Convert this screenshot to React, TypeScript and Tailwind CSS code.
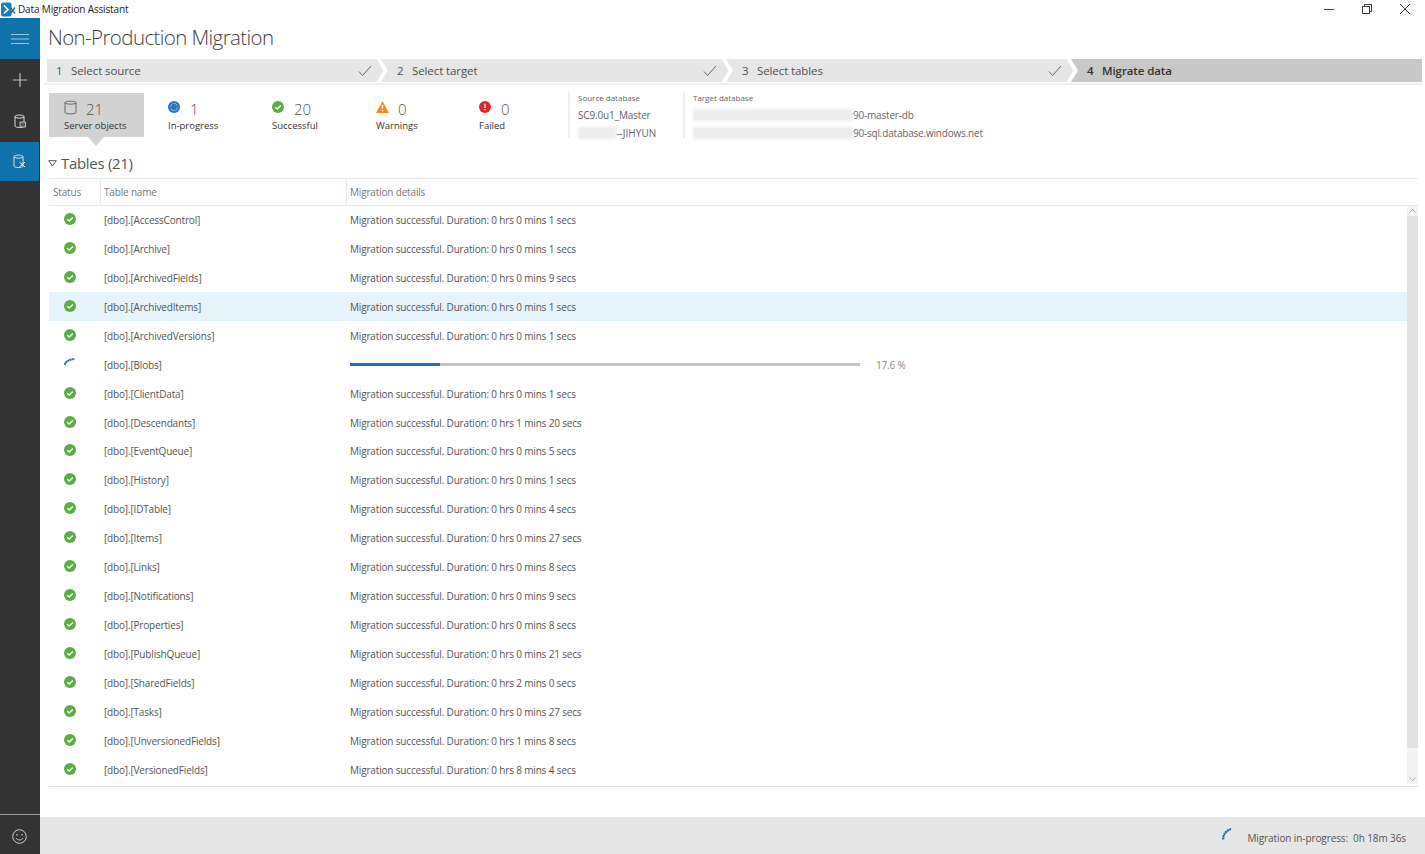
const rows: [string, string | null][] = [
  ["AccessControl", "0 hrs 0 mins 1 secs"],
  ["Archive", "0 hrs 0 mins 1 secs"],
  ["ArchivedFields", "0 hrs 0 mins 9 secs"],
  ["ArchivedItems", "0 hrs 0 mins 1 secs"],
  ["ArchivedVersions", "0 hrs 0 mins 1 secs"],
  ["Blobs", null],
  ["ClientData", "0 hrs 0 mins 1 secs"],
  ["Descendants", "0 hrs 1 mins 20 secs"],
  ["EventQueue", "0 hrs 0 mins 5 secs"],
  ["History", "0 hrs 0 mins 1 secs"],
  ["IDTable", "0 hrs 0 mins 4 secs"],
  ["Items", "0 hrs 0 mins 27 secs"],
  ["Links", "0 hrs 0 mins 8 secs"],
  ["Notifications", "0 hrs 0 mins 9 secs"],
  ["Properties", "0 hrs 0 mins 8 secs"],
  ["PublishQueue", "0 hrs 0 mins 21 secs"],
  ["SharedFields", "0 hrs 2 mins 0 secs"],
  ["Tasks", "0 hrs 0 mins 27 secs"],
  ["UnversionedFields", "0 hrs 1 mins 8 secs"],
  ["VersionedFields", "0 hrs 8 mins 4 secs"],
];

function CheckCircle({ size = 12 }: { size?: number }) {
  return (
    <svg width={size} height={size} viewBox="0 0 12 12">
      <circle cx="6" cy="6" r="6" fill="#5cad45" />
      <path d="M3.2 6.2 5.2 8 8.8 4.4" fill="none" stroke="#fff" strokeWidth="1.4" />
    </svg>
  );
}

function RowSpinner() {
  return (
    <svg width="12" height="12" viewBox="0 0 12 12">
      <path d="M.6 7C1.6 3.4 5 1.4 10.6 1" fill="none" stroke="#2a68b4" strokeWidth="2" strokeDasharray="2 0.4" />
    </svg>
  );
}

function BarSpinner() {
  return (
    <svg width="10" height="12" viewBox="0 0 10 12">
      <path d="M1.2 11.5C1 7 3.6 2.6 9.4 .8" fill="none" stroke="#2a68b4" strokeWidth="2.2" strokeDasharray="2 0.4" />
    </svg>
  );
}

function Chevron({ left, right }: { left: string; right: string }) {
  return (
    <svg width="14" height="23" viewBox="0 0 14 23" className="shrink-0 block">
      <rect width="14" height="23" fill={right} />
      <path d="M0 0H2L9 11.5 2 23H0Z" fill={left} />
      <path d="M1.5 0 8.5 11.5 1.5 23H6L13 11.5 6 0Z" fill="#fff" />
    </svg>
  );
}

function Tick() {
  return (
    <svg width="14" height="12" viewBox="0 0 14 12" className="shrink-0">
      <path d="M1 6.5 4.6 10.5 13 1" fill="none" stroke="#666" strokeWidth="1" />
    </svg>
  );
}

function Step({ n, label, width, done, active, first }: { n: number; label: string; width?: string; done?: boolean; active?: boolean; first?: boolean }) {
  return (
    <div className={`${width ?? "flex-1"} h-full flex items-center ${first ? "pl-[9px]" : "pl-[8px]"} pr-[3px] text-[11.5px] tracking-[-0.1px] ${active ? "bg-[#c8c8c8] text-[#333] font-semibold" : "bg-[#e6e6e6] text-[#505050]"}`}>
      <span className="w-[15px]">{n}</span>
      <span className="flex-1">{label}</span>
      {done && <Tick />}
    </div>
  );
}

function Stat({ icon, n, label, width, iconShift }: { icon: React.ReactNode; n: number; label: string; width: string; iconShift?: string }) {
  return (
    <div className={`${width} pl-[6px] pt-[6px]`}>
      <div className="flex h-[18px] items-center">
        <span className={`w-[22px] flex ${iconShift ?? "-mt-[3px]"}`}>{icon}</span>
        <span className="text-[15px] leading-none font-light text-[#555] mt-[2px]">{n}</span>
      </div>
      <div className="text-[9.5px] leading-[14px] mt-[2px] text-[#333] whitespace-nowrap">{label}</div>
    </div>
  );
}

function Blur({ width }: { width: string }) {
  return <div className={`${width} h-[12px] bg-[#ededed] blur-[1.5px] shrink-0`} />;
}

export default function App() {
  return (
    <div className="h-screen w-full overflow-hidden flex flex-col bg-white font-['Open_Sans',sans-serif]">
      {/* Title bar */}
      <div className="h-[18px] shrink-0 flex items-center">
        <svg width="15" height="15" viewBox="0 0 15 15" className="ml-[1px]">
          <rect width="10.5" height="14" y="0.5" rx="2" fill="#1a7dbd" />
          <path d="M2.8 3.5 7 7.5 2.8 11.5" fill="none" stroke="#fff" strokeWidth="1.5" />
          <path d="M9.5 5.5 14 11.5M14 5.5 9.5 11.5" fill="none" stroke="#1a6aa8" strokeWidth="1.3" />
        </svg>
        <span className="ml-[2px] text-[10px] text-[#222] tracking-[-0.15px] whitespace-nowrap">Data Migration Assistant</span>
        <div className="ml-auto flex items-center pr-[14px]">
          <svg width="10" height="10" viewBox="0 0 10 10"><path d="M0 5.5H10" stroke="#444" strokeWidth="1" /></svg>
          <svg width="10" height="10" viewBox="0 0 10 10" fill="none" stroke="#333" className="ml-[28px]"><path d="M.5 2.5H7.5V9.5H.5ZM2.5 2.5V.5H9.5V7.5H7.5" /></svg>
          <svg width="12" height="12" viewBox="0 0 12 12" className="ml-[27px]"><path d="M1 1 11 11M11 1 1 11" stroke="#444" strokeWidth="1" /></svg>
        </div>
      </div>

      <div className="flex-1 flex min-h-0">
        {/* Sidebar */}
        <div className="w-10 shrink-0 bg-[#333333] flex flex-col">
          <div className="h-[41px] bg-[#1072ab] flex items-center justify-center">
            <svg width="18" height="12" viewBox="0 0 18 12"><path d="M0 1.5H18M0 6H18M0 10.5H18" stroke="#9cc8e2" strokeWidth="1" /></svg>
          </div>
          <div className="h-[41px] flex items-center justify-center">
            <svg width="14" height="14" viewBox="0 0 14 14"><path d="M7 0V14M0 7H14" stroke="#bbb" strokeWidth="1.2" /></svg>
          </div>
          <div className="h-[42px] flex items-center justify-center pr-[1px]">
            <svg width="12" height="15" viewBox="0 0 12 15" fill="none" stroke="#ddd">
              <path d="M1 2.5C1 .6 10 .6 10 2.5V12C10 14 1 14 1 12Z" />
              <path d="M1 3C3 4.6 8 4.6 10 3" />
              <path d="M6 8H11.5V13H6Z" fill="#555" strokeWidth="0.8" />
            </svg>
          </div>
          <div className="h-[39px] w-[39px] bg-[#1072ab] flex items-center justify-center">
            <svg width="13" height="15" viewBox="0 0 13 15" fill="none" stroke="#cfe4f1">
              <path d="M1 2.5C1 .6 10 .6 10 2.5V12C10 14 1 14 1 12Z" />
              <path d="M1 3C3 4.6 8 4.6 10 3" />
              <path d="M6.5 8 12 13M12 8 6.5 13" stroke="#fff" />
            </svg>
          </div>
          <div className="flex-1" />
          <div className="h-[40px] border-t border-[#9a9a9a] flex items-center justify-center pt-[4px] pr-[1px]">
            <svg width="15" height="15" viewBox="0 0 15 15" fill="none" stroke="#ccc">
              <circle cx="7.5" cy="7.5" r="6.8" />
              <path d="M4 9C5 11.6 10 11.6 11 9" />
              <path d="M5 5V6.5M10 5V6.5" strokeWidth="1.2" />
            </svg>
          </div>
        </div>

        {/* Main */}
        <div className="flex-1 min-w-0 flex flex-col">
          <div className="h-[41px] shrink-0 pl-2 pt-[4px] text-[20.5px] leading-[30px] font-light text-[#444] tracking-[-0.6px] whitespace-nowrap">
            Non-Production Migration
          </div>

          {/* Steps */}
          <div className="ml-[7px] mr-[3px] h-[23px] shrink-0 flex">
            <Step n={1} label="Select source" width="w-[328px]" done first />
            <Chevron left="#e6e6e6" right="#e6e6e6" />
            <Step n={2} label="Select target" width="w-[331px]" done />
            <Chevron left="#e6e6e6" right="#e6e6e6" />
            <Step n={3} label="Select tables" width="w-[331px]" done />
            <Chevron left="#e6e6e6" right="#c8c8c8" />
            <Step n={4} label="Migrate data" active />
          </div>
          <div className="h-[2px] mt-[1px] ml-[4px] mr-[3px] bg-[#f0f0f0] shrink-0" />

          {/* Stats */}
          <div className="h-[66px] shrink-0 flex pl-[9px] pt-[8px]">
            <div className="w-[95px] h-[44px] bg-[#d2d2d2] relative pl-[9px]">
              <Stat
                width="w-full"
                n={21}
                label="Server objects"
                iconShift="-mt-[1px]"
                icon={
                  <svg width="13" height="15" viewBox="0 0 13 15" fill="none" stroke="#666">
                    <path d="M1 2.5C1 .7 12 .7 12 2.5V12.5C12 14.3 1 14.3 1 12.5Z" />
                    <path d="M1 3C3 4.6 10 4.6 12 3" />
                  </svg>
                }
              />
              <div className="absolute left-[39px] top-[44px] w-0 h-0 border-x-[8px] border-x-transparent border-t-[9px] border-t-[#d2d2d2]" />
            </div>
            <div className="w-[24px]" />
            <Stat
              width="w-[104px] -ml-[6px]"
              n={1}
              label="In-progress"
              icon={
                <svg width="12" height="12" viewBox="0 0 13 13">
                  <circle cx="6.5" cy="6.5" r="6.5" fill="#2a73bd" />
                  <path d="M3 6.5A3.5 3.5 0 0 1 10 5.5M10 6.5A3.5 3.5 0 0 1 3 7.5" fill="none" stroke="#8fb9e2" strokeWidth="1" />
                </svg>
              }
            />
            <Stat width="w-[104px]" n={20} label="Successful" icon={<CheckCircle size={12} />} />
            <Stat
              width="w-[103px]"
              n={0}
              label="Warnings"
              icon={
                <svg width="13" height="12" viewBox="0 0 14 13">
                  <path d="M7 0 14 13H0Z" fill="#f28a1e" />
                  <path d="M7 4V8.5M7 9.7V11.2" stroke="#fff" strokeWidth="1.5" />
                </svg>
              }
            />
            <Stat
              width="w-[95px]"
              n={0}
              label="Failed"
              icon={
                <svg width="12" height="12" viewBox="0 0 13 13">
                  <circle cx="6.5" cy="6.5" r="6.5" fill="#e3262a" />
                  <path d="M6.5 3V7.5M6.5 8.6V10" stroke="#fff" strokeWidth="1.6" />
                </svg>
              }
            />
            {/* DB info */}
            <div className="w-[115px] h-[46px] border-l-2 border-[#eeeeee] pl-2 text-[#666] -mt-px">
              <div className="text-[8px] leading-[12px] text-[#666] whitespace-nowrap">Source database</div>
              <div className="text-[10px] leading-[18px] mt-[2px] tracking-[-0.15px] whitespace-nowrap">SC9.0u1_Master</div>
              <div className="text-[10px] leading-[18px] flex items-center whitespace-nowrap">
                <Blur width="w-[38px]" />
                <span className="tracking-[0.1px]">--JIHYUN</span>
              </div>
            </div>
            <div className="h-[46px] border-l-2 border-[#eeeeee] pl-2 text-[#666] -mt-px">
              <div className="text-[8px] leading-[12px] whitespace-nowrap">Target database</div>
              <div className="text-[10px] leading-[18px] mt-[2px] tracking-[-0.2px] flex items-center whitespace-nowrap">
                <Blur width="w-[160px]" />
                90-master-db
              </div>
              <div className="text-[10px] leading-[18px] tracking-[-0.2px] flex items-center whitespace-nowrap">
                <Blur width="w-[160px]" />
                90-sql.database.windows.net
              </div>
            </div>
          </div>

          {/* Tables heading */}
          <div className="h-[27px] shrink-0 flex items-center pl-[8px] pb-[3px]">
            <svg width="9" height="7" viewBox="0 0 9 7" fill="none" stroke="#555" className="mt-[1px]"><path d="M.7.7H8.3L4.5 6Z" /></svg>
            <span className="ml-[4px] text-[15px] text-[#555] tracking-[-0.3px]">Tables (21)</span>
          </div>

          {/* Table */}
          <div className="ml-[9px] mr-[7px] flex flex-col text-[10px] tracking-[-0.17px]">
            <div className="h-[27.5px] border-y-[1px] border-y-[#e8e8e8] flex items-center text-[#777]">
              <div className="w-[52px] pl-1 h-[22px] pt-[1px] flex items-center border-r border-[#e4e4e4]">Status</div>
              <div className="w-[246px] pl-[3px] h-[22px] pt-[1px] flex items-center border-r border-[#e4e4e4]">Table name</div>
              <div className="pl-[3px] pt-[1px]">Migration details</div>
            </div>
            <div className="flex border-b border-[#e0e0e0] pb-[1.5px]">
              <div className="flex-1 min-w-0">
                {rows.map(([name, dur]) => (
                  <div
                    key={name}
                    className={`h-[28.95px] flex items-center text-[#555] pt-[1px] ${name === "ArchivedItems" ? "bg-[#e5f3fb]" : ""}`}
                  >
                    <div className="w-[52px] pl-[15px] flex -mt-[3px]">
                      {dur ? <CheckCircle /> : <RowSpinner />}
                    </div>
                    <div className="w-[246px] pl-[3px] whitespace-nowrap">[dbo].[{name}]</div>
                    <div className="pl-[3px] flex items-center whitespace-nowrap">
                      {dur ? (
                        `Migration successful. Duration: ${dur}`
                      ) : (
                        <>
                          <div className="w-[510px] h-[3px] bg-[#c4c4c4] -mt-[2px]">
                            <div className="h-full bg-[#2a70b8]" style={{ width: "17.6%" }} />
                          </div>
                          <span className="ml-[16px] text-[#888]">17.6 %</span>
                        </>
                      )}
                    </div>
                  </div>
                ))}
              </div>
              {/* Scrollbar */}
              <div className="w-[11px] shrink-0 bg-[#f4f4f4] flex flex-col">
                <div className="h-[10px] flex items-center justify-center">
                  <svg width="7" height="4" viewBox="0 0 7 4" fill="none" stroke="#aaa"><path d="M.5 3.5 3.5.5 6.5 3.5" /></svg>
                </div>
                <div className="h-[532px] bg-[#e2e2e2]" />
                <div className="flex-1" />
                <div className="h-[10px] flex items-center justify-center">
                  <svg width="7" height="4" viewBox="0 0 7 4" fill="none" stroke="#aaa"><path d="M.5.5 3.5 3.5 6.5.5" /></svg>
                </div>
              </div>
            </div>
          </div>

          {/* Status bar */}
          <div className="mt-auto h-[37px] shrink-0 bg-[#e6e6e6] flex items-center justify-end pr-[19px] text-[10px] text-[#555]">
            <span className="flex -mt-[3px]"><BarSpinner /></span>
            <span className="ml-[15px] mt-[5px] tracking-[-0.1px] whitespace-nowrap">Migration in-progress:&nbsp; 0h 18m 36s</span>
          </div>
        </div>
      </div>
    </div>
  );
}
